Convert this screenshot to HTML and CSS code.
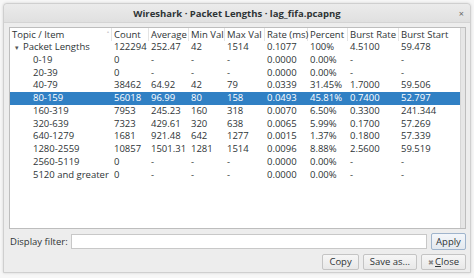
FILE: index.html
```html
<!DOCTYPE html>
<html lang="en">
<head>
    <meta charset="UTF-8">
    <title>Wireshark · Packet Lengths · lag_fifa.pcapng</title>
    <link rel="stylesheet" href="styles.css">
</head>
<body>
    <div class="window">
        <div class="titlebar">
            <div class="title">Wireshark · Packet Lengths · lag_fifa.pcapng</div>
            <div class="close-x">×</div>
        </div>

        <div class="content">
            <div class="tree">
                <div class="tree-body">
                    <div class="row header">
                        <div class="cell first">Topic / Item<span class="sort">˄</span></div>
                        <div class="cell">Count</div>
                        <div class="cell">Average</div>
                        <div class="cell">Min Val</div>
                        <div class="cell">Max Val</div>
                        <div class="cell">Rate (ms)</div>
                        <div class="cell">Percent</div>
                        <div class="cell">Burst Rate</div>
                        <div class="cell">Burst Start</div>
                    </div>
                    <div id="rows"></div>
                </div>
                <div class="vscroll"></div>
            </div>

            <div class="filter-row">
                <label>Display filter:</label>
                <input type="text" class="filter-input">
                <button class="btn apply">Apply</button>
            </div>

            <div class="button-row">
                <button class="btn">Copy</button>
                <button class="btn">Save as...</button>
                <button class="btn"><span class="x-icon">✖</span><u>C</u>lose</button>
            </div>
        </div>
    </div>

    <script>
        const data = [
            ['Packet Lengths', '122294', '252.47', '42', '1514', '0.1077', '100%', '4.5100', '59.478', 'parent'],
            ['0-19', '0', '-', '-', '-', '0.0000', '0.00%', '-', '-'],
            ['20-39', '0', '-', '-', '-', '0.0000', '0.00%', '-', '-'],
            ['40-79', '38462', '64.92', '42', '79', '0.0339', '31.45%', '1.7000', '59.506'],
            ['80-159', '56018', '96.99', '80', '158', '0.0493', '45.81%', '0.7400', '52.797', 'selected'],
            ['160-319', '7953', '245.23', '160', '318', '0.0070', '6.50%', '0.3300', '241.344'],
            ['320-639', '7323', '429.61', '320', '638', '0.0065', '5.99%', '0.1700', '57.269'],
            ['640-1279', '1681', '921.48', '642', '1277', '0.0015', '1.37%', '0.1800', '57.339'],
            ['1280-2559', '10857', '1501.31', '1281', '1514', '0.0096', '8.88%', '2.5600', '59.519'],
            ['2560-5119', '0', '-', '-', '-', '0.0000', '0.00%', '-', '-'],
            ['5120 and greater', '0', '-', '-', '-', '0.0000', '0.00%', '-', '-']
        ];

        const rows = document.getElementById('rows');
        data.forEach(item => {
            const row = document.createElement('div');
            row.className = 'row';
            if (item[9]) row.classList.add(item[9]);
            for (let i = 0; i < 9; i++) {
                const cell = document.createElement('div');
                cell.className = i === 0 ? 'cell first' : 'cell';
                if (i === 0 && item[9] === 'parent') {
                    cell.innerHTML = '<span class="arrow">▾</span>' + item[0];
                } else if (i === 0) {
                    cell.innerHTML = '<span class="indent"></span>' + item[0];
                } else {
                    cell.textContent = item[i];
                }
                row.appendChild(cell);
            }
            rows.appendChild(row);
        });
    </script>
</body>
</html>
```

FILE: styles.css
```css
body, html {
    margin: 0;
    padding: 0;
    background: #f7f7f7;
    font-family: "Open Sans", "Noto Sans", sans-serif;
    font-size: 9.5px;
    color: #2e3436;
}

.window {
    margin: 3px;
    width: 466px;
    height: 268px;
    background: #ededed;
    border: 1px solid #cfcfcf;
    border-radius: 4px 4px 0 0;
    box-shadow: 0 0 3px rgba(0, 0, 0, 0.15);
    display: flex;
    flex-direction: column;
}

.titlebar {
    height: 18px;
    background: linear-gradient(#ebebeb, #e0e0e0);
    border-bottom: 1px solid #d4d4d4;
    border-radius: 4px 4px 0 0;
    display: flex;
    align-items: center;
    justify-content: center;
    position: relative;
}

.title {
    font-weight: bold;
    font-size: 9.5px;
    color: #2e3436;
}

.close-x {
    position: absolute;
    right: 6px;
    top: 3px;
    font-size: 9px;
    color: #666;
}

.content {
    padding: 4px 4px 0 5px;
    display: flex;
    flex-direction: column;
}

.tree {
    height: 200px;
    border: 1px solid #bdbdbd;
    background: #fff;
    display: flex;
}

.tree-body {
    flex: 1;
}

.vscroll {
    width: 4px;
    background: #e6e6e6;
    border-left: 1px solid #d6d6d6;
}

.row {
    display: grid;
    grid-template-columns: 102px 37px 40px 36px 40px 43px 40px 51px 1fr;
    height: 12.75px;
    line-height: 12.75px;
    white-space: nowrap;
}

.row.header {
    height: 13px;
    line-height: 13px;
}

.row.header .cell {
    border-right: 1px solid #e4e4e4;
    position: relative;
}

.row.header .cell:last-child {
    border-right: none;
}

.cell {
    padding-left: 2px;
    overflow: visible;
}

.sort {
    position: absolute;
    right: 2px;
    top: 0;
    font-size: 7px;
    color: #555;
}

.arrow {
    display: inline-block;
    width: 8px;
    padding-left: 3px;
    font-size: 7px;
    color: #555;
}

.indent {
    display: inline-block;
    width: 21px;
}

.row.selected {
    background: #3080c4;
    color: #fff;
}

.row.selected .cell {
    color: #fff;
}

.filter-row {
    display: flex;
    align-items: center;
    margin-top: 4px;
    height: 17px;
}

.filter-row label {
    padding-left: 1px;
    margin-right: 3px;
}

.filter-input {
    flex: 1;
    height: 13px;
    margin: 0 4px 0 0;
    padding: 0;
    border: 1px solid #c8c8c8;
    background: #fff;
}

.btn {
    font-family: "Open Sans", "Noto Sans", sans-serif;
    font-size: 9.5px;
    color: #2e3436;
    background: linear-gradient(#f6f6f6, #e8e8e8);
    border: 1px solid #c4c4c4;
    border-radius: 2px;
    height: 17px;
    padding: 0 6px;
    margin: 0;
    line-height: 14px;
}

.btn.apply {
    width: 35px;
    padding: 0;
    border-color: #9fb4cc;
    background: linear-gradient(#f3f6fa, #e4e9ef);
}

.button-row {
    display: flex;
    justify-content: flex-end;
    gap: 4px;
    margin-top: 4px;
}

.button-row .btn {
    height: 16px;
}

.x-icon {
    font-size: 7px;
    color: #888;
    margin-right: 1px;
}
```
